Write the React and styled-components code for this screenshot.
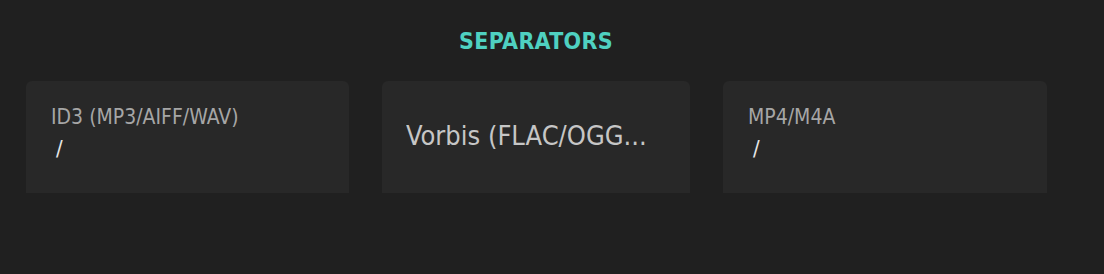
import React from 'react'
import styled, { createGlobalStyle } from 'styled-components'

const GlobalStyle = createGlobalStyle`
  html, body {
    margin: 0;
    background: #202020;
    font-family: "DejaVu Sans Condensed", "DejaVu Sans", sans-serif;
    font-stretch: condensed;
  }
`

const Section = styled.section`
  width: 1020px;
  margin-left: 26px;
  padding-top: 28px;
`

const Title = styled.h2`
  margin: 0 0 26px;
  text-align: center;
  color: #4fd1c1;
  font-size: 23px;
  font-weight: bold;
  line-height: 27px;
  letter-spacing: 0.3px;
`

const Row = styled.div`
  display: grid;
  grid-template-columns: 323px 308px 324px;
  column-gap: 33px;
`

const Field = styled.div`
  height: 112px;
  box-sizing: border-box;
  background: #282828;
  border-radius: 6px 6px 0 0;
  padding: ${p => (p.$empty ? '0 24px' : '24px 25px 0')};
  display: flex;
  flex-direction: column;
  justify-content: ${p => (p.$empty ? 'center' : 'flex-start')};
  overflow: hidden;
`

const Label = styled.label`
  color: #a6a6a6;
  font-size: ${p => (p.$big ? '27px' : '21px')};
  line-height: ${p => (p.$big ? '32px' : '24px')};
  white-space: nowrap;
  overflow: hidden;
  text-overflow: ellipsis;
  ${p => p.$big && 'color: #c6c6c6; padding-bottom: 2px;'}
`

const Value = styled.div`
  margin-top: 7px;
  padding-left: 5px;
  color: #e6e6e6;
  font-size: 22px;
  line-height: 26px;
`

const fields = [
  { label: 'ID3 (MP3/AIFF/WAV)', value: '/' },
  { label: 'Vorbis (FLAC/OGG...', value: '' },
  { label: 'MP4/M4A', value: '/' },
]

export default function App() {
  return (
    <>
      <GlobalStyle />
      <Section>
        <Title>SEPARATORS</Title>
        <Row>
          {fields.map(f => (
            <Field key={f.label} $empty={!f.value}>
              <Label $big={!f.value}>{f.label}</Label>
              {f.value && <Value>{f.value}</Value>}
            </Field>
          ))}
        </Row>
      </Section>
    </>
  )
}
